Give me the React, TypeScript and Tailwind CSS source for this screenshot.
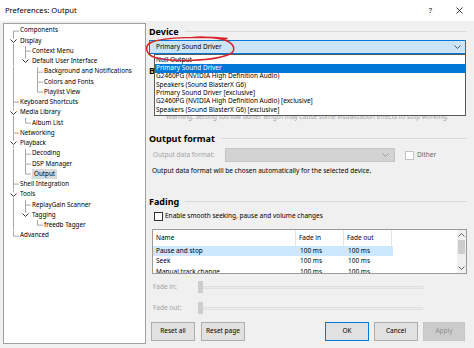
import React from 'react'

type TreeRow = {
  label: string
  depth: number
  open?: boolean
  first?: boolean
  last?: boolean
  selected?: boolean
  guides: boolean[]
}

const tree: TreeRow[] = [
  { label: 'Components', depth: 0, first: true, guides: [] },
  { label: 'Display', depth: 0, open: true, guides: [] },
  { label: 'Context Menu', depth: 1, guides: [true] },
  { label: 'Default User Interface', depth: 1, open: true, last: true, guides: [true] },
  { label: 'Background and Notifications', depth: 2, guides: [true, false] },
  { label: 'Colors and Fonts', depth: 2, guides: [true, false] },
  { label: 'Playlist View', depth: 2, last: true, guides: [true, false] },
  { label: 'Keyboard Shortcuts', depth: 0, guides: [] },
  { label: 'Media Library', depth: 0, open: true, guides: [] },
  { label: 'Album List', depth: 1, last: true, guides: [true] },
  { label: 'Networking', depth: 0, guides: [] },
  { label: 'Playback', depth: 0, open: true, guides: [] },
  { label: 'Decoding', depth: 1, guides: [true] },
  { label: 'DSP Manager', depth: 1, guides: [true] },
  { label: 'Output', depth: 1, last: true, selected: true, guides: [true] },
  { label: 'Shell Integration', depth: 0, guides: [] },
  { label: 'Tools', depth: 0, open: true, guides: [] },
  { label: 'ReplayGain Scanner', depth: 1, guides: [true] },
  { label: 'Tagging', depth: 1, open: true, last: true, guides: [true] },
  { label: 'freedb Tagger', depth: 2, last: true, guides: [true, false] },
  { label: 'Advanced', depth: 0, last: true, guides: [] },
]

const devices = [
  'Null Output',
  'Primary Sound Driver',
  'G2460PG (NVIDIA High Definition Audio)',
  'Speakers (Sound BlasterX G6)',
  'Primary Sound Driver [exclusive]',
  'G2460PG (NVIDIA High Definition Audio) [exclusive]',
  'Speakers (Sound BlasterX G6) [exclusive]',
]

const fades = [
  ['Pause and stop', '100 ms', '100 ms'],
  ['Seek', '100 ms', '100 ms'],
  ['Manual track change', '100 ms', '100 ms'],
]

function Chevron({ up = false, color = '#444' }: { up?: boolean; color?: string }) {
  return (
    <svg width="7" height="4" viewBox="0 0 7 4" className="block">
      <path d={up ? 'M0.5 3.5 L3.5 0.5 L6.5 3.5' : 'M0.5 0.5 L3.5 3.5 L6.5 0.5'} fill="none" stroke={color} strokeWidth="1" />
    </svg>
  )
}

// one 12px column of tree connector lines
function Guide({ kind, first, last }: { kind: 'pass' | 'empty' | 'leaf' | 'open'; first?: boolean; last?: boolean }) {
  const stroke = '#a6a6a6'
  return (
    <div className="relative flex h-full w-[12px] flex-none items-center justify-center">
      <svg className="absolute inset-0 h-full w-full overflow-visible">
        {kind === 'pass' && <line x1="6.5" y1="0" x2="6.5" y2="100%" stroke={stroke} />}
        {kind === 'leaf' && (
          <>
            {!first && <line x1="6.5" y1="0" x2="6.5" y2="50%" stroke={stroke} />}
            {!last && <line x1="6.5" y1="50%" x2="6.5" y2="100%" stroke={stroke} />}
            <line x1="6.5" y1="50%" x2="12" y2="50%" stroke={stroke} />
          </>
        )}
        {kind === 'open' && (
          <>
            <line x1="6.5" y1="0" x2="6.5" y2="25%" stroke={stroke} />
            {!last && <line x1="6.5" y1="75%" x2="6.5" y2="100%" stroke={stroke} />}
          </>
        )}
      </svg>
      {kind === 'open' && (
        <div className="relative bg-white">
          <Chevron color="#333" />
        </div>
      )}
    </div>
  )
}

function Heading({ title }: { title: string }) {
  return (
    <div className="flex h-[12px] flex-none items-center gap-[6px]">
      <span className="text-[9px] font-bold leading-none text-black">{title}</span>
      <div className="h-px flex-1 bg-[#dadada]" />
    </div>
  )
}

function Box({ disabled = false }: { disabled?: boolean }) {
  return (
    <div
      className={`h-[9px] w-[9px] flex-none border bg-white ${disabled ? 'border-[#c4c4c4]' : 'border-[#333]'}`}
    />
  )
}

function Slider({ label }: { label: string }) {
  return (
    <div className="ml-[4px] flex h-[12px] flex-none items-center">
      <span className="w-[45px] flex-none text-[#a3a3a3]">{label}</span>
      <div className="h-[12px] w-[5px] flex-none bg-[#cdcdcd]" />
      <div className="h-[3px] w-[220px] flex-none border border-[#e0e0e0] bg-[#ebebeb]" />
    </div>
  )
}

function Button({ label, w, kind = 'normal' }: { label: string; w: string; kind?: 'normal' | 'default' | 'disabled' }) {
  const look =
    kind === 'default'
      ? 'border-[#0078d7] bg-[#e1e1e1] text-black'
      : kind === 'disabled'
        ? 'border-[#c6c6c6] bg-[#cccccc] text-[#8f8f8f]'
        : 'border-[#adadad] bg-[#e1e1e1] text-black'
  return (
    <div className={`flex h-full flex-none items-center justify-center border ${w} ${look}`}>{label}</div>
  )
}

export default function App() {
  return (
    <div className="relative flex h-[348px] w-[474px] flex-col overflow-hidden bg-[#f0f0f0] font-['Noto_Sans','Open_Sans',sans-serif] text-[6.3px] leading-none text-black">
      {/* title bar */}
      <div className="flex h-[21px] flex-none items-center bg-white pl-[5px] pr-[11px]">
        <span className="text-[7.6px]">Preferences: Output</span>
        <span className="ml-auto text-[7.6px] text-[#222]">?</span>
        <svg width="7" height="7" viewBox="0 0 7 7" className="ml-[24px]">
          <path d="M0.5 0.5 L6.5 6.5 M6.5 0.5 L0.5 6.5" stroke="#222" strokeWidth="0.9" />
        </svg>
      </div>

      <div className="flex flex-1 pl-[3px] pt-[2px]">
        {/* page tree */}
        <div className="flex h-[321px] w-[143px] flex-none flex-col border border-[#a0a0a0] bg-white pl-[3px] pt-[1.5px]">
          {tree.map((row) => (
            <div key={row.label} className="flex h-[10.25px] flex-none items-center">
              {row.guides.map((g, i) => (
                <Guide key={i} kind={g ? 'pass' : 'empty'} />
              ))}
              <Guide kind={row.open ? 'open' : 'leaf'} first={row.first} last={row.last} />
              <span
                className={`ml-[1px] whitespace-nowrap ${row.selected ? '-ml-[1px] bg-[#d9d9d9] px-[2px] py-[2px]' : ''}`}
              >
                {row.label}
              </span>
            </div>
          ))}
        </div>

        {/* settings page */}
        <div className="ml-[3px] flex w-[318px] flex-none flex-col text-[6.5px]">
          <div className="mt-[2px]">
            <Heading title="Device" />
          </div>

          <div className="relative mt-[3px] h-[14px] w-[317px] flex-none">
            <div className="flex h-full items-center border border-[#0078d7] bg-[#cce4f7] pl-[6px] pr-[4px]">
              <span>Primary Sound Driver</span>
              <span className="ml-auto">
                <Chevron color="#555" />
              </span>
            </div>
            <div className="absolute left-[5px] right-0 top-full z-10 flex flex-col border border-[#5a5a5a] bg-white py-px">
              {devices.map((d, i) => (
                <div
                  key={d}
                  className={`flex h-[8.3px] items-center pl-[1px] ${i === 1 ? 'bg-[#0078d7] text-white' : ''}`}
                >
                  {d}
                </div>
              ))}
            </div>
          </div>

          <div className="mt-[10px]">
            <Heading title="Buffer length" />
          </div>

          <div className="ml-[17px] mt-[37px] flex h-[8px] flex-none items-center whitespace-nowrap text-[#a3a3a3]">
            Warning: Setting too low buffer length may cause some visualization effects to stop working.
          </div>

          <div className="mt-[11px]">
            <Heading title="Output format" />
          </div>

          <div className="mt-[4px] flex h-[14px] flex-none items-center">
            <span className="ml-[4px] w-[72px] flex-none text-[#a3a3a3]">Output data format:</span>
            <div className="flex h-full w-[170px] flex-none items-center justify-end border border-[#c4c4c4] bg-[#d3d3d3] pr-[5px]">
              <Chevron color="#9a9a9a" />
            </div>
            <div className="ml-[10px]">
              <Box disabled />
            </div>
            <span className="ml-[3px] text-[#666]">Dither</span>
          </div>

          <div className="ml-[3px] mt-[5px] flex h-[8px] flex-none items-center">
            Output data format will be chosen automatically for the selected device.
          </div>

          <div className="mt-[20px]">
            <Heading title="Fading" />
          </div>

          <div className="ml-[5px] mt-[4px] flex h-[10px] flex-none items-center gap-[2px]">
            <Box />
            <span>Enable smooth seeking, pause and volume changes</span>
          </div>

          <div className="ml-[3px] mt-[8px] flex h-[45px] w-[315px] flex-none overflow-hidden border border-[#9a9a9a] bg-white">
            <div className="flex flex-1 flex-col">
              <div className="flex h-[15.5px] flex-none">
                <div className="flex w-[143px] items-center border-r border-[#e5e5e5] pl-[3px]">Name</div>
                <div className="flex w-[48px] items-center border-r border-[#e5e5e5] pl-[3px]">Fade in</div>
                <div className="flex w-[48px] items-center border-r border-[#e5e5e5] pl-[3px]">Fade out</div>
              </div>
              {fades.map((f, i) => (
                <div
                  key={f[0]}
                  className={`flex h-[10.5px] w-[240px] flex-none items-center ${i === 0 ? 'bg-[#cce8ff]' : ''}`}
                >
                  <span className="w-[144px] pl-[3px]">{f[0]}</span>
                  <span className="w-[48px] pl-[3px]">{f[1]}</span>
                  <span className="w-[48px] pl-[3px]">{f[2]}</span>
                </div>
              ))}
            </div>
            <div className="flex w-[9px] flex-none flex-col bg-[#f0f0f0]">
              <div className="flex h-[10px] flex-none items-center justify-center">
                <Chevron up color="#606060" />
              </div>
              <div className="mx-[1px] h-[14px] flex-none bg-[#cdcdcd]" />
              <div className="flex-1" />
              <div className="flex h-[10px] flex-none items-center justify-center">
                <Chevron color="#606060" />
              </div>
            </div>
          </div>

          <div className="mt-[7px]">
            <Slider label="Fade in:" />
          </div>
          <div className="mt-[9px]">
            <Slider label="Fade out:" />
          </div>

          <div className="ml-[2px] mr-[2px] mt-[8px] flex h-[19px] flex-none items-center">
            <Button label="Reset all" w="w-[44px]" />
            <div className="ml-[6px]">
              <div className="h-[19px]">
                <Button label="Reset page" w="w-[44px]" />
              </div>
            </div>
            <div className="ml-auto flex h-full gap-[5px]">
              <Button label="OK" w="w-[44px]" kind="default" />
              <Button label="Cancel" w="w-[44px]" />
              <Button label="Apply" w="w-[42px]" kind="disabled" />
            </div>
          </div>
        </div>
      </div>

      {/* red hand-drawn annotation around the device box */}
      <svg className="absolute left-[143px] top-[35px] z-20" width="96" height="30" viewBox="0 0 96 30">
        <path
          d="M84 3.5 C62 1.5 22 2 9 7 C1 10 2 19 12 22.5 C30 27.5 72 26 87 19 C94 15 91 7.5 80 4.5 C72 2.5 60 2 50 2.5"
          fill="none"
          stroke="#d8232a"
          strokeWidth="1.5"
          strokeLinecap="round"
        />
      </svg>
    </div>
  )
}
